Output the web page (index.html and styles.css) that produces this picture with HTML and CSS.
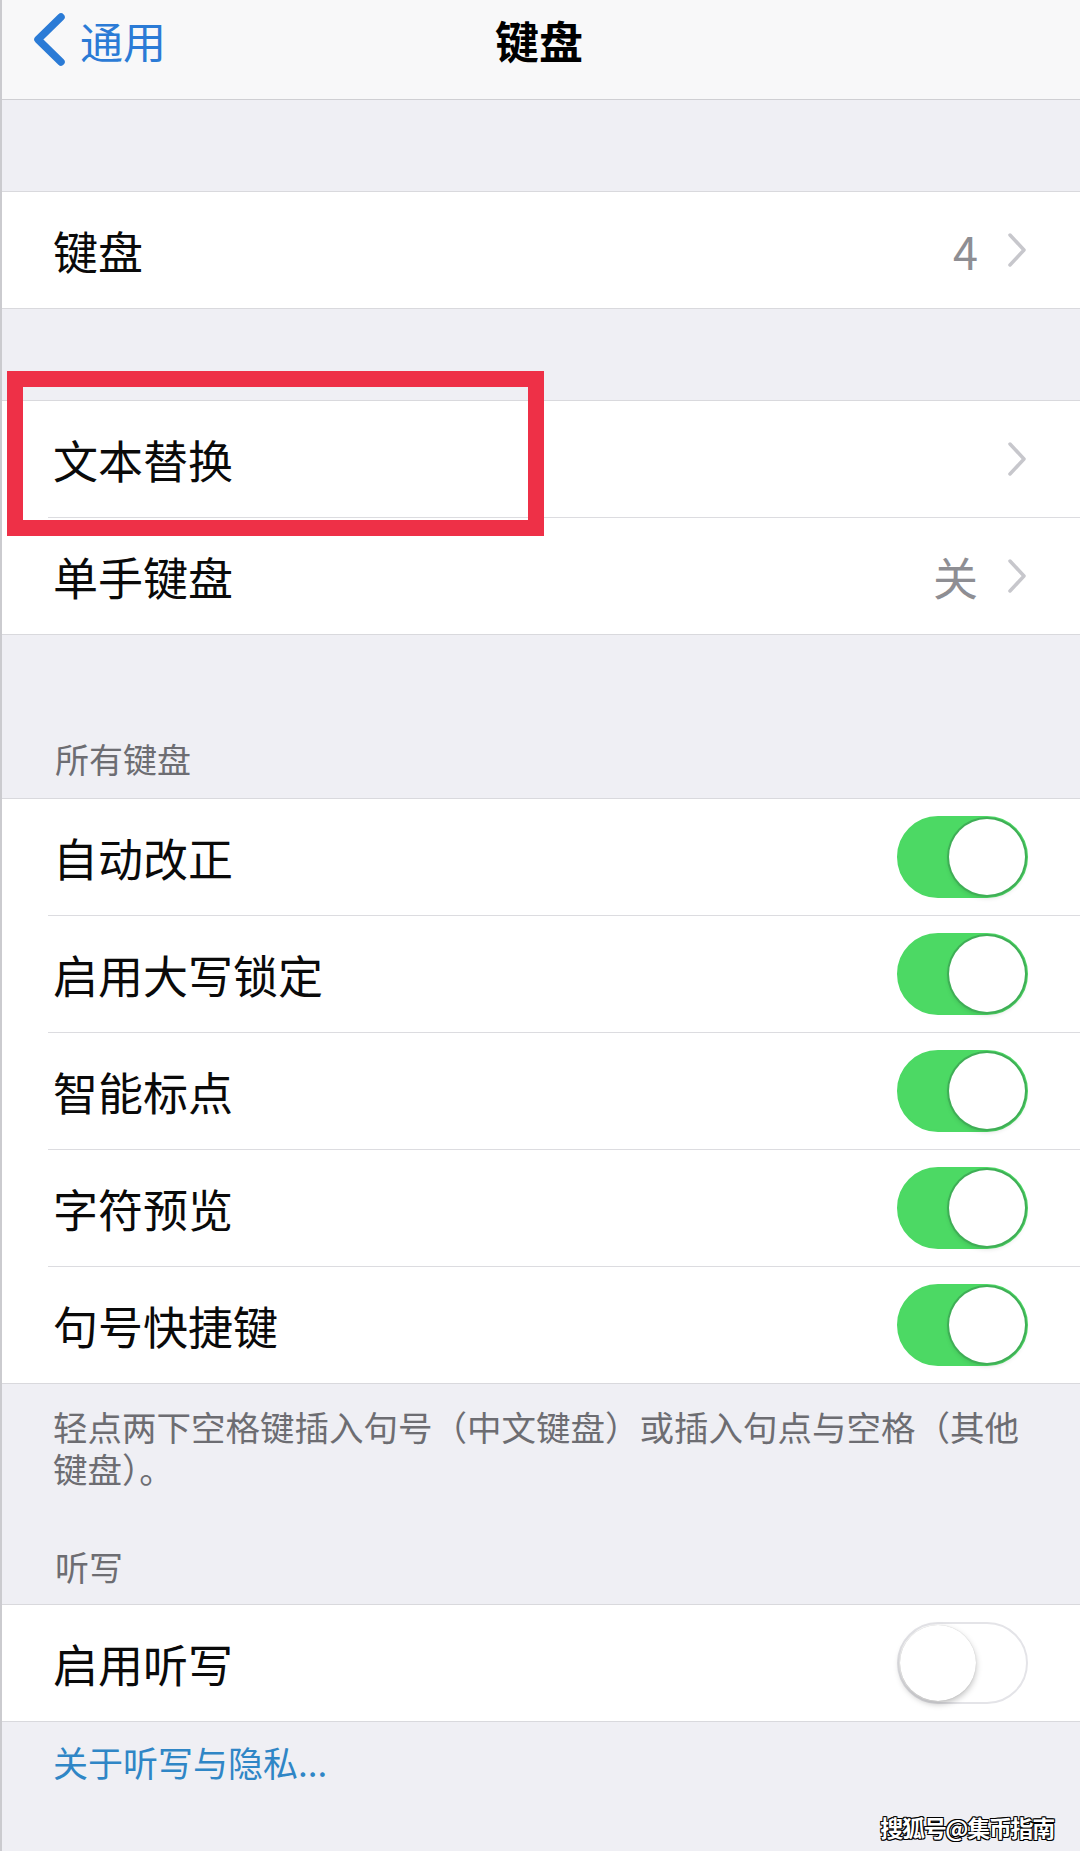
FILE: index.html
```html
<!DOCTYPE html>
<html lang="zh-CN">
<head>
    <meta charset="UTF-8">
    <meta name="viewport" content="width=device-width, initial-scale=1.0">
    <title>键盘</title>
    <link rel="stylesheet" href="styles.css">
</head>
<body>
<div class="page">

    <header class="navbar">
        <a class="back">
            <svg width="40" height="62" viewBox="0 0 40 62"><polyline points="31,8 8,30.5 31,53" fill="none" stroke="#2b7bd6" stroke-width="7.5" stroke-linecap="round" stroke-linejoin="round"/></svg>
            <span>通用</span>
        </a>
        <h1>键盘</h1>
        <div></div>
    </header>

    <div class="group first">
        <div class="cell">
            <span class="label">键盘</span>
            <span class="detail">4</span>
            <svg class="chevron" width="22" height="36" viewBox="0 0 22 36"><polyline points="4,3 18,18 4,33" fill="none" stroke="#c7c7cc" stroke-width="3.5" stroke-linecap="round" stroke-linejoin="round"/></svg>
        </div>
    </div>

    <div class="group marked">
        <div class="mark"></div>
        <div class="cell">
            <span class="label">文本替换</span>
            <svg class="chevron" width="22" height="36" viewBox="0 0 22 36"><polyline points="4,3 18,18 4,33" fill="none" stroke="#c7c7cc" stroke-width="3.5" stroke-linecap="round" stroke-linejoin="round"/></svg>
        </div>
        <div class="cell">
            <span class="label">单手键盘</span>
            <span class="detail">关</span>
            <svg class="chevron" width="22" height="36" viewBox="0 0 22 36"><polyline points="4,3 18,18 4,33" fill="none" stroke="#c7c7cc" stroke-width="3.5" stroke-linecap="round" stroke-linejoin="round"/></svg>
        </div>
    </div>

    <div class="section-header first-header">所有键盘</div>
    <div class="group">
        <div class="cell"><span class="label">自动改正</span><span class="switch on"><span class="knob"></span></span></div>
        <div class="cell"><span class="label">启用大写锁定</span><span class="switch on"><span class="knob"></span></span></div>
        <div class="cell"><span class="label">智能标点</span><span class="switch on"><span class="knob"></span></span></div>
        <div class="cell"><span class="label">字符预览</span><span class="switch on"><span class="knob"></span></span></div>
        <div class="cell"><span class="label">句号快捷键</span><span class="switch on"><span class="knob"></span></span></div>
    </div>
    <p class="section-footer">轻点两下空格键插入句号（中文键盘）或插入句点与空格（其他键盘）。</p>

    <div class="section-header">听写</div>
    <div class="group">
        <div class="cell"><span class="label">启用听写</span><span class="switch"><span class="knob"></span></span></div>
    </div>
    <p class="section-footer link">关于听写与隐私...</p>

    <div class="watermark">搜狐号@集币指南</div>
</div>
</body>
</html>
```

FILE: styles.css
```css
html, body { margin: 0; padding: 0; background-color: #efeff4; }
body { font-family: "Noto Sans CJK SC", "Noto Sans", sans-serif; color: #000; }
.page { position: relative; height: 1851px; border-left: 2px solid #cbcbcf; box-sizing: border-box; overflow: hidden; }

.navbar { background-color: #f8f8f9; border-bottom: 1px solid #cfcfd3; display: grid; grid-template-columns: 1fr auto 1fr; align-items: center; padding: 0 0 19px 0; height: 80px; }
.back { display: flex; align-items: center; gap: 10px; padding-left: 28px; color: #2b7bd6; font-size: 43px; line-height: 1; }
.back svg { display: block; }
.navbar h1 { margin: 0 0 0 -4px; font-size: 44px; font-weight: 700; line-height: 1; }

.group { background-color: #fff; border-top: 1px solid #d9d9dd; border-bottom: 1px solid #d9d9dd; margin-top: 91px; }
.group.marked { position: relative; }
.cell { height: 116px; margin-left: 46px; padding: 0 52px 0 5px; display: flex; align-items: center; }
.cell + .cell { border-top: 1px solid #dcdce0; }
.label { flex: 1; font-size: 45px; line-height: 1; color: #0a0a0a; }
.detail { font-size: 45px; line-height: 1; color: #8e8e93; margin-right: 28px; }
.chevron { display: block; }

.mark { position: absolute; left: 5px; top: -30px; width: 537px; height: 165px; border: 16px solid #ee3047; box-sizing: border-box; z-index: 2; }

.section-header { font-size: 34px; line-height: 40px; color: #6d6d72; padding: 58px 53px 17px; }
.first-header { padding-top: 104px; padding-bottom: 19px; }
.section-header + .group { margin-top: 0; }

.section-footer { margin: 0; padding: 21px 48px 0 51px; font-size: 34.5px; line-height: 42px; color: #6d6d72; }
.section-footer.link { color: #2f86c6; font-size: 35px; padding-top: 19px; }

.switch { width: 131px; height: 82px; border-radius: 41px; box-sizing: border-box; border: 2px solid #e4e4e8; background-color: #fff; display: flex; align-items: center; padding: 1px; }
.switch .knob { width: 76px; height: 76px; border-radius: 50%; background-color: #fff; box-shadow: 0 3px 6px rgba(0, 0, 0, 0.25), 0 0 1px rgba(0, 0, 0, 0.2); }
.switch.on { background-color: #4cd964; border-color: #4cd964; justify-content: flex-end; }
.switch.on .knob { box-shadow: 0 0 0 2px #3fae56, 0 3px 5px rgba(0, 0, 0, 0.15); }

.watermark { position: absolute; right: 26px; top: 1810px; font-size: 23px; font-weight: 700; color: #fff; letter-spacing: -1.3px; text-shadow: 1px 1px 0 #000, -1px -1px 0 #000, 1px -1px 0 #000, -1px 1px 0 #000, 0 1px 0 #000, 0 -1px 0 #000; }
```
